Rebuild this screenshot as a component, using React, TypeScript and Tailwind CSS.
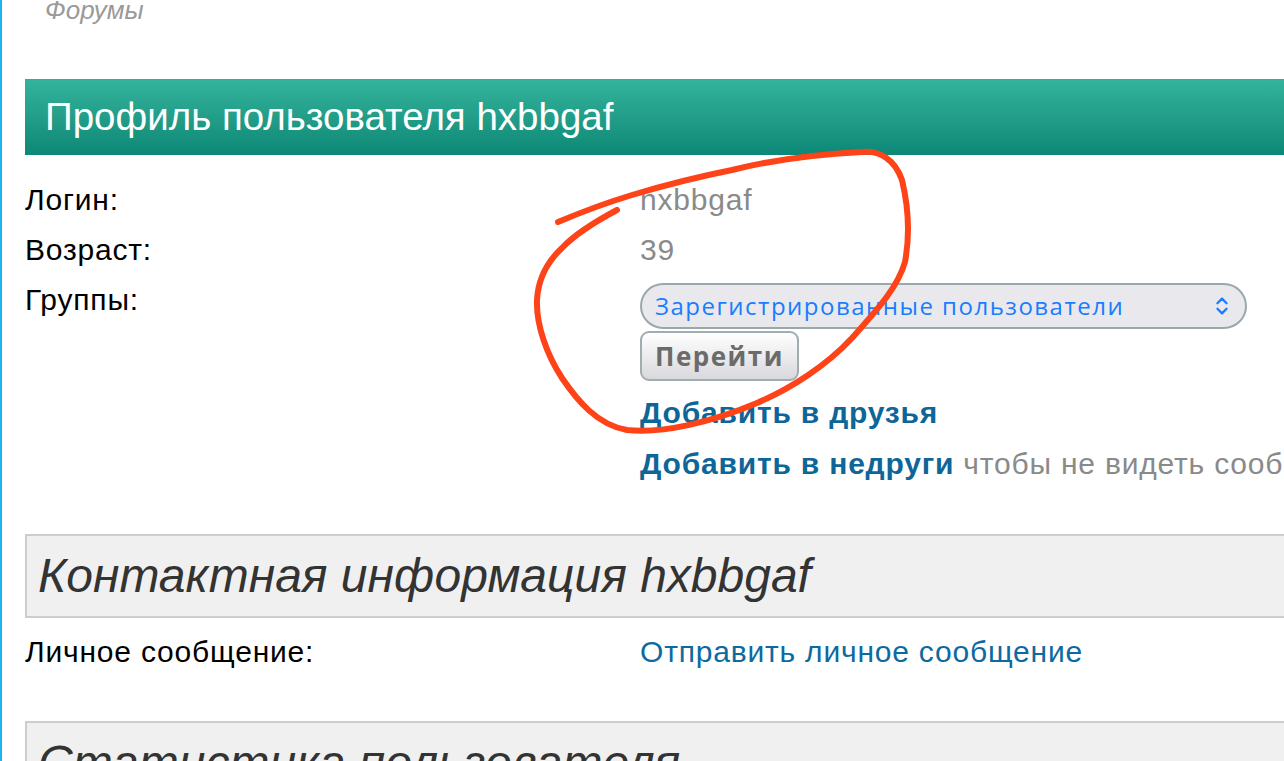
import { ChevronsUpDown } from "lucide-react";

const sans = { fontFamily: '"Liberation Sans", Arial, sans-serif' };
const ui = { fontFamily: '"Open Sans", "Liberation Sans", sans-serif' };

function Annotation() {
  return (
    <svg
      className="pointer-events-none absolute left-0 top-0"
      width="1284"
      height="761"
      viewBox="0 0 1284 761"
      fill="none"
    >
      <path
        d="M615 210 C600 218 575 232 560 248 C545 262 536 280 535 300 C534 325 545 355 560 378 C575 400 595 425 625 430 C660 434 710 422 755 403 C790 388 825 365 850 338 C870 315 895 290 903 262 C908 235 906 205 900 180 C893 160 878 150 860 152 C820 154 770 160 730 170 C690 178 660 186 630 195 C600 204 575 214 556 222"
        stroke="#ff4319"
        strokeWidth="6"
        strokeLinecap="round"
        strokeLinejoin="round"
      />
    </svg>
  );
}

function Row({ label, children }: { label: string; children: React.ReactNode }) {
  return (
    <div className="grid grid-cols-[615px_1fr]">
      <div className="text-[30px] leading-[50px] tracking-[0.8px] text-black">{label}</div>
      <div>{children}</div>
    </div>
  );
}

export default function App() {
  return (
    <div
      className="relative h-[761px] w-[1284px] overflow-hidden border-l-2 border-[#1ab6ea] bg-white"
      style={sans}
    >
      <div className="w-[1400px] pl-[23px]">
        <div className="-mt-[8px] pl-[20px] text-[26px] italic leading-[36px] text-[#9a9a9a]">Форумы</div>

        <div className="mt-[51px] flex h-[76px] items-center border-t border-[#5c9a90] bg-gradient-to-b from-[#33b39b] to-[#0b8877] pl-[20px]">
          <h1 className="text-[38.5px] leading-none text-white">Профиль пользователя hxbbgaf</h1>
        </div>

        <div className="mt-[20px]">
          <Row label="Логин:">
            <div className="text-[30px] leading-[50px] tracking-[0.8px] text-[#8a8a8a]">nxbbgaf</div>
          </Row>
          <Row label="Возраст:">
            <div className="text-[30px] leading-[50px] tracking-[0.8px] text-[#8a8a8a]">39</div>
          </Row>
          <Row label="Группы:">
            <div className="pt-[8px]">
              <div
                className="flex h-[46px] w-[607px] items-center justify-between rounded-full border-2 border-[#9aa8ac] bg-[#e9e9ed] pl-[13px] pr-[12px] text-[24px] tracking-[1.5px] text-[#1a7cff]"
                style={ui}
              >
                <span>Зарегистрированные пользователи</span>
                <ChevronsUpDown className="h-[22px] w-[22px]" strokeWidth={2.5} />
              </div>
              <button
                className="mt-[2px] flex h-[50px] w-[159px] items-center justify-center rounded-[9px] border-2 border-[#a1adb0] bg-gradient-to-b from-[#ffffff] to-[#d9d9dd] text-[26px] font-bold tracking-[1.5px] text-[#6b6b6b]"
                style={ui}
              >
                Перейти
              </button>
              <div className="mt-[7px] text-[30px] font-bold leading-[50px] tracking-[0.8px] text-[#0d6598]">
                Добавить в друзья
              </div>
              <div className="whitespace-nowrap text-[30px] leading-[52px] tracking-[0.8px] text-[#8a8a8a]">
                <span className="font-bold text-[#0d6598]">Добавить в недруги</span> чтобы не видеть сообщения
              </div>
            </div>
          </Row>
        </div>

        <div className="mt-[44px] flex h-[84px] items-center border-y-2 border-l-2 border-[#cdcdcd] bg-[#f0f0f0] pl-[11px]">
          <h2 className="text-[48px] italic leading-none text-[#333]">Контактная информация hxbbgaf</h2>
        </div>

        <div className="mt-[9px]">
          <Row label="Личное сообщение:">
            <div className="text-[30px] leading-[50px] tracking-[0.8px] text-[#0d6aa0]">Отправить личное сообщение</div>
          </Row>
        </div>

        <div className="mt-[44px] flex h-[84px] items-center border-y-2 border-l-2 border-[#cdcdcd] bg-[#f0f0f0] pl-[11px]">
          <h2 className="text-[48px] italic leading-none text-[#333]">Статистика пользователя</h2>
        </div>
      </div>
      <Annotation />
    </div>
  );
}
